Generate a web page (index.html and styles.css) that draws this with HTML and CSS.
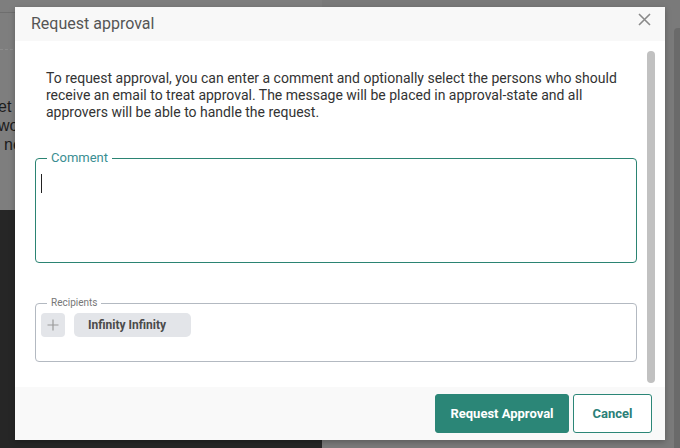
FILE: index.html
```html
<!DOCTYPE html>
<html>
<head>
<meta charset="utf-8">
<link rel="stylesheet" href="styles.css">
</head>
<body>
<div class="page">
  <div class="page-left">
    <div class="page-top">
      <div class="page-rule"></div>
      <div class="page-rule dashed"></div>
      <div class="page-text">
        <div>et n</div>
        <div>work</div>
        <div class="indent">ne</div>
      </div>
    </div>
    <div class="page-dark"></div>
  </div>
  <div class="page-right">
    <div class="page-side"></div>
  </div>
</div>

<div class="dialog">
  <div class="dialog-header">
    <span class="dialog-title">Request approval</span>
    <button class="close-btn" aria-label="Close">
      <svg width="13" height="13" viewBox="0 0 13 13"><path d="M1 1L12 12M12 1L1 12" stroke="#8a8a8a" stroke-width="1.6" fill="none"/></svg>
    </button>
  </div>
  <div class="dialog-body">
    <div class="content">
      <p class="intro">To request approval, you can enter a comment and optionally select the persons who should receive an email to treat approval. The message will be placed in approval-state and all approvers will be able to handle the request.</p>
      <fieldset class="field comment">
        <legend>Comment</legend>
        <div class="comment-input"><span class="caret"></span></div>
      </fieldset>
      <fieldset class="field recipients">
        <legend>Recipients</legend>
        <div class="recipient-row">
          <button class="add-btn" aria-label="Add">
            <svg width="12" height="12" viewBox="0 0 12 12"><path d="M6 0.5V11.5M0.5 6H11.5" stroke="#9a9a9a" stroke-width="1.2" fill="none"/></svg>
          </button>
          <span class="chip">Infinity Infinity</span>
        </div>
      </fieldset>
    </div>
    <div class="scroll-track"><div class="scroll-thumb"></div></div>
  </div>
  <div class="dialog-footer">
    <button class="btn primary">Request Approval</button>
    <button class="btn secondary">Cancel</button>
  </div>
</div>
</body>
</html>
```

FILE: styles.css
```css
html, body {
  margin: 0;
  padding: 0;
  width: 680px;
  height: 448px;
  overflow: hidden;
}
body {
  background: #7a7a7a;
  font-family: Roboto, "Liberation Sans", sans-serif;
}
.page {
  display: flex;
  width: 680px;
  height: 448px;
}
.page-left {
  width: 322px;
  display: flex;
  flex-direction: column;
}
.page-top {
  height: 210px;
  background: #7e7e7e;
  display: flex;
  flex-direction: column;
}
.page-rule {
  height: 0;
  border-top: 1px solid #6e6e6e;
  margin-top: 12px;
}
.page-rule.dashed {
  border-top: 1px dashed #8c8c8c;
  margin-top: 36px;
}
.page-text {
  margin-top: 47px;
  margin-left: -2px;
  font-family: "Liberation Sans", Arial, sans-serif;
  font-size: 16px;
  line-height: 19px;
  color: #1c1c1c;
}
.page-text .indent {
  padding-left: 6px;
}
.page-dark {
  flex: 1;
  background: #262626;
}
.page-right {
  flex: 1;
  display: flex;
  justify-content: flex-end;
  padding-top: 28px;
}
.page-side {
  width: 6px;
  background: #6a6a6a;
  border-top-left-radius: 4px;
}

.dialog {
  position: absolute;
  left: 15px;
  top: 7px;
  width: 650px;
  height: 433px;
  background: #fff;
  display: flex;
  flex-direction: column;
  box-shadow: 0 2px 6px rgba(0,0,0,0.25);
}
.dialog-header {
  height: 34px;
  flex: none;
  background: #f8f8f8;
  display: flex;
  align-items: center;
  justify-content: space-between;
  padding: 0 14px 0 16px;
}
.dialog-title {
  font-size: 16px;
  color: #555;
  margin-top: -1px;
}
.close-btn {
  border: 0;
  background: none;
  padding: 0;
  width: 13px;
  height: 13px;
  margin-top: -10px;
  display: flex;
}
.dialog-body {
  flex: 1;
  display: flex;
  gap: 10px;
  padding: 0 10px 0 20px;
  min-height: 0;
}
.content {
  flex: 1;
  padding-top: 29px;
}
.intro {
  margin: 0 0 29px 0;
  padding: 0 11px;
  font-size: 14px;
  line-height: 17px;
  color: #333;
}
.field {
  margin: 0;
  padding: 0;
  border-radius: 4px;
  min-width: 0;
}
.field legend {
  padding: 0 4px;
  margin-left: 11px;
}
.comment {
  border: 1px solid #2b8473;
}
.comment legend {
  font-size: 13px;
  line-height: 16px;
  color: #3a8e92;
}
.comment-input {
  height: 96px;
  padding: 8px 5px 0;
  box-sizing: border-box;
}
.caret {
  display: block;
  width: 1px;
  height: 19px;
  background: #222;
}
.recipients {
  margin-top: 34px;
  border: 1px solid #b3b9c1;
}
.recipients legend {
  font-size: 10px;
  line-height: 12px;
  color: #777;
}
.recipient-row {
  display: flex;
  gap: 9px;
  padding: 4px 5px 24px;
}
.add-btn {
  width: 24px;
  height: 24px;
  border: 0;
  border-radius: 4px;
  background: #e3e5e9;
  padding: 0;
  display: flex;
  align-items: center;
  justify-content: center;
}
.chip {
  height: 24px;
  display: flex;
  align-items: center;
  padding: 0 25px 0 14px;
  border-radius: 5px;
  background: #e3e5e9;
  font-size: 12px;
  font-weight: 700;
  color: #4b4b4b;
}
.scroll-track {
  width: 8px;
  padding: 10px 0 4px;
  display: flex;
}
.scroll-thumb {
  flex: 1;
  background: #c1c1c1;
  border-radius: 4px;
}
.dialog-footer {
  height: 53px;
  flex: none;
  box-sizing: border-box;
  background: #f9f9f9;
  display: flex;
  justify-content: flex-end;
  gap: 4px;
  padding: 7px 13px 7px 0;
}
.btn {
  height: 39px;
  border-radius: 3px;
  font-family: Roboto, "Liberation Sans", sans-serif;
  font-size: 13px;
  font-weight: 700;
  padding: 0;
}
.btn.primary {
  width: 134px;
  background: #2b8677;
  border: 1px solid #2b8677;
  color: #fff;
}
.btn.secondary {
  width: 79px;
  background: #fff;
  border: 1px solid #2b8677;
  color: #2b7f78;
}
```
